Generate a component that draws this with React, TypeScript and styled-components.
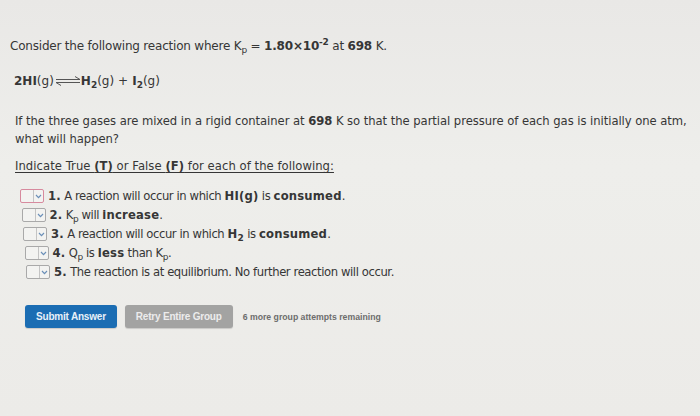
import React from 'react';
import styled, { createGlobalStyle } from 'styled-components';

const GlobalStyle = createGlobalStyle`
  html, body {
    margin: 0;
    padding: 0;
    background: #ebeae7;
  }
  body {
    font-family: "DejaVu Sans", Verdana, sans-serif;
    color: #363636;
  }
`;

const Page = styled.div`
  width: 700px;
  height: 416px;
  box-sizing: border-box;
  padding: 38px 0 0 10px;
  background: linear-gradient(180deg, #e9e8e6 0%, #eeeeeb 40%, #ecebe8 100%);
  overflow: hidden;
`;

const Prompt = styled.p`
  margin: 0;
  font-size: 12px;
  letter-spacing: -0.2px;
  line-height: 16px;
`;

const Sub = styled.sub`
  font-size: 9px;
  vertical-align: -3px;
  line-height: 0;
`;

const Sup = styled.sup`
  font-size: 9px;
  vertical-align: 5px;
  line-height: 0;
`;

const Equation = styled.div`
  display: flex;
  align-items: center;
  margin: 19px 0 0 4px;
  font-size: 12px;
  letter-spacing: 0px;
  line-height: 16px;
`;

const Chem = styled.b`
  font-weight: bold;
`;

const Question = styled.p`
  margin: 23px 0 0 5px;
  font-size: 11.6px;
  letter-spacing: -0.05px;
  line-height: 18px;
`;

const Instructions = styled.p`
  margin: 10px 0 0 5px;
  font-size: 11.6px;
  letter-spacing: 0.05px;
  line-height: 16px;
  text-decoration: underline;
  text-underline-offset: 2px;
`;

const StatementList = styled.ol`
  list-style: none;
  margin: 14px 0 0 0;
  padding: 0;
  display: flex;
  flex-direction: column;
  gap: 3px;
`;

const Row = styled.li<{ $shift: number }>`
  display: flex;
  align-items: center;
  gap: 4px;
  margin-left: ${p => 10 + p.$shift}px;
  font-size: 11.6px;
  letter-spacing: -0.4px;
  line-height: 16px;

  b {
    letter-spacing: 0.2px;
  }
`;

const Dropdown = styled.div<{ $alert?: boolean }>`
  display: flex;
  justify-content: flex-end;
  align-items: stretch;
  width: 24px;
  height: 14px;
  border: 1px solid ${p => (p.$alert ? '#d78a9e' : '#a9a9a9')};
  border-radius: 2px;
  background: #f3f3f1;
  box-sizing: border-box;
`;

const Caret = styled.span`
  display: flex;
  align-items: center;
  justify-content: center;
  width: 9px;
  border-left: 1px solid #c4c4c4;
`;

const Num = styled.b``;

const ButtonBar = styled.div`
  display: flex;
  align-items: center;
  gap: 8px;
  margin: 25px 0 0 15px;
`;

const Button = styled.button<{ $primary?: boolean }>`
  height: 23px;
  padding: 0 11px;
  border: none;
  border-radius: 3px;
  font-family: "Liberation Sans", Arial, sans-serif;
  font-weight: bold;
  font-size: 10px;
  letter-spacing: -0.2px;
  color: ${p => (p.$primary ? '#e8f0f8' : '#ececec')};
  background: ${p => (p.$primary ? '#1b6db3' : '#a3a3a2')};
  box-shadow: 0 1px 1px rgba(0, 0, 0, 0.15);
`;

const Attempts = styled.span`
  margin-left: 2px;
  font-family: "Liberation Sans", Arial, sans-serif;
  font-weight: bold;
  font-size: 8.7px;
  color: #6c6c6c;
`;

const EquilibriumArrow = () => (
  <svg width="26" height="12" viewBox="0 0 26 12" style={{ margin: '0 0 0 1px' }}>
    <path d="M1 4.5 H25 L20 1.5" fill="none" stroke="#555" strokeWidth="1" />
    <path d="M25 7.5 H1 L6 10.5" fill="none" stroke="#555" strokeWidth="1" />
  </svg>
);

const Chevron = () => (
  <svg width="7" height="5" viewBox="0 0 7 5">
    <path d="M1 1 L3.5 3.6 L6 1" fill="none" stroke="#6b8fb8" strokeWidth="1.2" />
  </svg>
);

const statements: React.ReactNode[] = [
  <>A reaction will occur in which <b>HI(g)</b> is <b>consumed</b>.</>,
  <>K<Sub>p</Sub> will <b>increase</b>.</>,
  <>A reaction will occur in which <b>H<Sub>2</Sub></b> is <b>consumed</b>.</>,
  <>Q<Sub>p</Sub> is <b>less</b> than K<Sub>p</Sub>.</>,
  <>The reaction is at equilibrium. No further reaction will occur.</>,
];

export default function App() {
  return (
    <Page>
      <GlobalStyle />
      <Prompt>
        Consider the following reaction where K<Sub>p</Sub> = <b>1.80×10<Sup>-2</Sup></b> at <b>698</b> K.
      </Prompt>
      <Equation>
        <Chem>2HI</Chem>(g)
        <EquilibriumArrow />
        <Chem>H<Sub>2</Sub></Chem>(g) + <Chem>&nbsp;I<Sub>2</Sub></Chem>(g)
      </Equation>
      <Question>
        If the three gases are mixed in a rigid container at <b>698</b> K so that the partial pressure of each gas is initially one atm,
        <br />
        what will happen?
      </Question>
      <Instructions>
        Indicate True <b>(T)</b> or False <b>(F)</b> for each of the following:
      </Instructions>
      <StatementList>
        {statements.map((s, i) => (
          <Row key={i} $shift={i * 1.5}>
            <Dropdown $alert={i === 0}>
              <Caret>
                <Chevron />
              </Caret>
            </Dropdown>
            <span>
              <Num>{i + 1}.</Num> {s}
            </span>
          </Row>
        ))}
      </StatementList>
      <ButtonBar>
        <Button $primary>Submit Answer</Button>
        <Button>Retry Entire Group</Button>
        <Attempts>6 more group attempts remaining</Attempts>
      </ButtonBar>
    </Page>
  );
}
